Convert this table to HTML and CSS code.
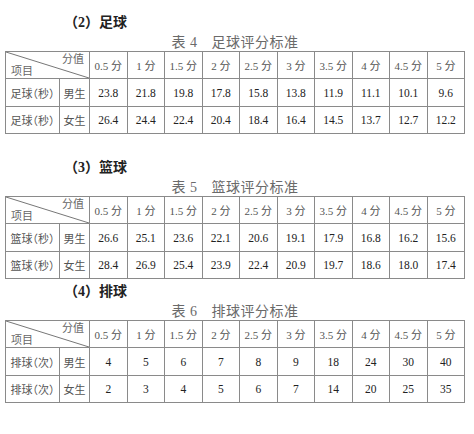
FILE: index.html
```html
<!DOCTYPE html>
<html lang="zh">
<head>
<meta charset="utf-8">
<title>评分标准</title>
<link rel="stylesheet" href="styles.css">
</head>
<body>
<section class="sec sec1">
  <h2 class="heading">（2）足球</h2>
  <p class="caption">表 4<span class="gap"></span>足球评分标准</p>
  <table class="score">
    <colgroup><col class="c-name"><col class="c-sex"><col span="10" class="c-val"></colgroup>
    <tr class="r-head">
      <th colspan="2" class="diag"><div class="diag-in"><svg class="slash" viewBox="0 0 100 100" preserveAspectRatio="none"><line x1="0" y1="0" x2="100" y2="100" vector-effect="non-scaling-stroke"/></svg><span class="k1">分值</span><span class="k2">项目</span></div></th>
      <th>0.5 分</th><th>1 分</th><th>1.5 分</th><th>2 分</th><th>2.5 分</th><th>3 分</th><th>3.5 分</th><th>4 分</th><th>4.5 分</th><th class="last">5 分</th>
    </tr>
    <tr class="r-a">
      <td class="name">足球（秒）</td><td class="sex">男生</td>
      <td class="v">23.8</td><td class="v">21.8</td><td class="v">19.8</td><td class="v">17.8</td><td class="v">15.8</td><td class="v">13.8</td><td class="v">11.9</td><td class="v">11.1</td><td class="v">10.1</td><td class="v last">9.6</td>
    </tr>
    <tr class="r-b">
      <td class="name">足球（秒）</td><td class="sex">女生</td>
      <td class="v">26.4</td><td class="v">24.4</td><td class="v">22.4</td><td class="v">20.4</td><td class="v">18.4</td><td class="v">16.4</td><td class="v">14.5</td><td class="v">13.7</td><td class="v">12.7</td><td class="v last">12.2</td>
    </tr>
  </table>
</section>

<section class="sec sec2">
  <h2 class="heading">（3）篮球</h2>
  <p class="caption">表 5<span class="gap"></span>篮球评分标准</p>
  <table class="score">
    <colgroup><col class="c-name"><col class="c-sex"><col span="10" class="c-val"></colgroup>
    <tr class="r-head">
      <th colspan="2" class="diag"><div class="diag-in"><svg class="slash" viewBox="0 0 100 100" preserveAspectRatio="none"><line x1="0" y1="0" x2="100" y2="100" vector-effect="non-scaling-stroke"/></svg><span class="k1">分值</span><span class="k2">项目</span></div></th>
      <th>0.5 分</th><th>1 分</th><th>1.5 分</th><th>2 分</th><th>2.5 分</th><th>3 分</th><th>3.5 分</th><th>4 分</th><th>4.5 分</th><th class="last">5 分</th>
    </tr>
    <tr class="r-a">
      <td class="name">篮球（秒）</td><td class="sex">男生</td>
      <td class="v">26.6</td><td class="v">25.1</td><td class="v">23.6</td><td class="v">22.1</td><td class="v">20.6</td><td class="v">19.1</td><td class="v">17.9</td><td class="v">16.8</td><td class="v">16.2</td><td class="v last">15.6</td>
    </tr>
    <tr class="r-b">
      <td class="name">篮球（秒）</td><td class="sex">女生</td>
      <td class="v">28.4</td><td class="v">26.9</td><td class="v">25.4</td><td class="v">23.9</td><td class="v">22.4</td><td class="v">20.9</td><td class="v">19.7</td><td class="v">18.6</td><td class="v">18.0</td><td class="v last">17.4</td>
    </tr>
  </table>
</section>

<section class="sec sec3">
  <h2 class="heading">（4）排球</h2>
  <p class="caption">表 6<span class="gap"></span>排球评分标准</p>
  <table class="score">
    <colgroup><col class="c-name"><col class="c-sex"><col span="10" class="c-val"></colgroup>
    <tr class="r-head">
      <th colspan="2" class="diag"><div class="diag-in"><svg class="slash" viewBox="0 0 100 100" preserveAspectRatio="none"><line x1="0" y1="0" x2="100" y2="100" vector-effect="non-scaling-stroke"/></svg><span class="k1">分值</span><span class="k2">项目</span></div></th>
      <th>0.5 分</th><th>1 分</th><th>1.5 分</th><th>2 分</th><th>2.5 分</th><th>3 分</th><th>3.5 分</th><th>4 分</th><th>4.5 分</th><th class="last">5 分</th>
    </tr>
    <tr class="r-a">
      <td class="name">排球（次）</td><td class="sex">男生</td>
      <td class="v">4</td><td class="v">5</td><td class="v">6</td><td class="v">7</td><td class="v">8</td><td class="v">9</td><td class="v">18</td><td class="v">24</td><td class="v">30</td><td class="v last">40</td>
    </tr>
    <tr class="r-b">
      <td class="name">排球（次）</td><td class="sex">女生</td>
      <td class="v">2</td><td class="v">3</td><td class="v">4</td><td class="v">5</td><td class="v">6</td><td class="v">7</td><td class="v">14</td><td class="v">20</td><td class="v">25</td><td class="v last">35</td>
    </tr>
  </table>
</section>
</body>
</html>
```

FILE: styles.css
```css
* { box-sizing: border-box; }
html, body { margin: 0; padding: 0; background: #fff; }
body {
  width: 474px;
  height: 434px;
  overflow: hidden;
  font-family: "Liberation Serif", "Noto Sans CJK SC", serif;
  color: #333;
}
.sec { padding-left: 5px; }
.sec1 { padding-top: 13px; }
.sec2 { margin-top: 24px; }
.sec3 { margin-top: 3px; }

.heading {
  margin: 0 0 0 59px;
  font-size: 14px;
  line-height: 20px;
  font-weight: 700;
  color: #222;
}
.caption {
  margin: 1px 0 0;
  width: 460px;
  text-align: center;
  font-size: 14px;
  line-height: 17px;
  color: #6a6a6a;
  letter-spacing: 0.5px;
}
.gap { display: inline-block; width: 14px; }

.score {
  border-collapse: collapse;
  table-layout: fixed;
  width: 460px;
  font-size: 11px;
  color: #444;
}
.c-name { width: 54px; }
.c-sex { width: 30px; }
.score th, .score td {
  border: 1px solid #8a8a8a;
  padding: 0;
  text-align: center;
  font-weight: normal;
  white-space: nowrap;
}
.score .last { border-left-color: #555; }
.r-head th { height: 27px; color: #555; }
.r-a td { height: 28px; }
.r-b td { height: 27px; }
.name { font-feature-settings: "halt" 1; color: #555; }
.sex { color: #555; }
.v { color: #222; font-size: 11.5px; }

.diag-in {
  position: relative;
  display: flex;
  flex-direction: column;
  justify-content: space-between;
  height: 26px;
  padding: 2px 5px 1px 5px;
  line-height: 11px;
  color: #666;
}
.slash {
  position: absolute;
  left: 0;
  top: 0;
  width: 100%;
  height: 100%;
  overflow: visible;
}
.slash line { stroke: #777; stroke-width: 1; }
.k1 { align-self: flex-end; position: relative; }
.k2 { align-self: flex-start; position: relative; }
```
